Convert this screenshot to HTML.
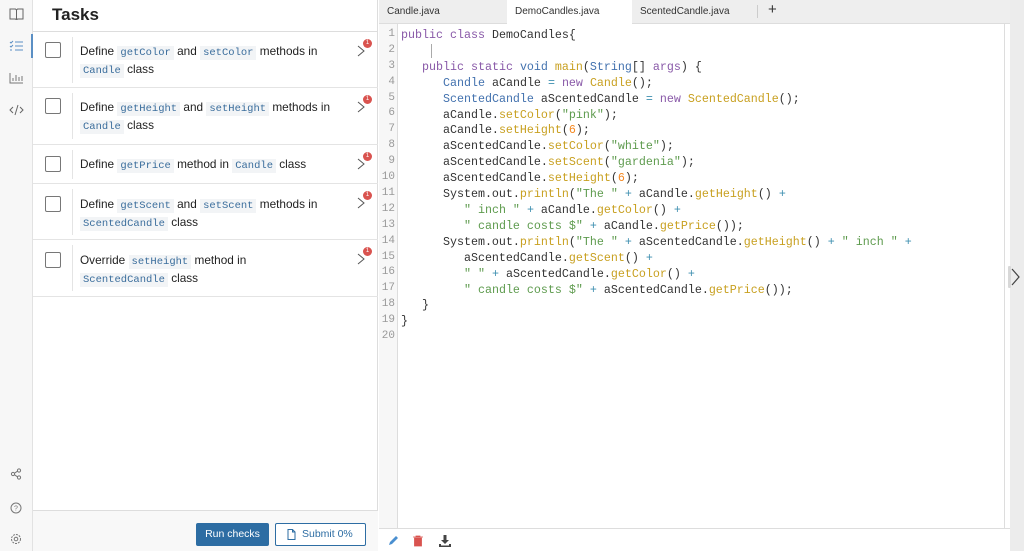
<!DOCTYPE html>
<html><head><style>
*{box-sizing:border-box;margin:0;padding:0}
body{width:1024px;height:551px;overflow:hidden;background:#fff;font-family:"Liberation Sans",sans-serif;position:relative;color:#222}
.side{position:absolute;left:0;top:0;width:33px;height:551px;background:#f7f7f7;border-right:1px solid #e2e2e2}
.side svg{position:absolute;left:9px}
.panel{position:absolute;left:33px;top:0;width:345px;height:551px;background:#fff;border-right:1px solid #ddd}
.hdr{height:32px;border-bottom:1px solid #ddd;font-weight:bold;font-size:17px;padding:5px 0 0 19px}
.row{position:absolute;left:0;width:345px;border-bottom:1px solid #e4e4e4}
.cb{position:absolute;left:12px;width:16px;height:16px;border:1.5px solid #777;border-radius:2px}
.vl{position:absolute;left:39px;width:1px;background:#e4e4e4}
.txt{position:absolute;left:47px;font-size:11.8px;line-height:16px;color:#222}
code{font-family:"Liberation Mono",monospace;font-size:10.5px;color:#3a6d9c;background:#f2f4f6;padding:1px 3px}
.arr{position:absolute;right:13px}
.badge{position:absolute;right:6px;width:9px;height:9px;border-radius:50%;background:#d9534f;color:#fff;font-size:6px;text-align:center;line-height:9px}
.foot{position:absolute;left:0;top:510px;width:345px;height:41px;border-top:1px solid #ddd;background:#f8f8f8}
.btn1{position:absolute;left:163px;top:12px;width:73px;height:23px;background:#2d6da3;color:#fff;font-size:10.5px;text-align:center;line-height:23px;border-radius:2px}
.btn2{position:absolute;left:242px;top:12px;width:91px;height:23px;border:1px solid #2d6da3;color:#2d6da3;font-size:10.5px;line-height:21px;padding-left:26px;background:#fff;border-radius:2px}
.tabs{position:absolute;left:379px;top:0;width:631px;height:24px;background:#eeeeee;border-bottom:1px solid #ddd}
.tab{position:absolute;top:0;height:24px;font-size:10px;line-height:24px;padding-left:8px;color:#333}
.gut{position:absolute;left:379px;top:24px;width:19px;height:504px;background:#f7f7f7;border-right:1px solid #ddd}
.ln{position:absolute;right:2px;font-family:"Liberation Mono",monospace;font-size:11px;color:#999}
pre{position:absolute;left:401px;top:28px;font-family:"Liberation Mono",monospace;font-size:11.66px;line-height:15.9px;color:#333}
.k{color:#8959a8}.t{color:#4271ae}.m{color:#c8a020}.s{color:#5e9b4e}.n{color:#f5871f}.o{color:#3e8fb0}
.bot{position:absolute;left:379px;top:528px;width:631px;height:23px;border-top:1px solid #ddd;background:#fff}
.rs{position:absolute;left:1004px;top:24px;width:1px;height:504px;background:#ddd}
.rstrip{position:absolute;left:1010px;top:0;width:14px;height:551px;background:#ececec}
</style></head><body>
<div class="side">
<svg style="top:8px" width="15" height="12" viewBox="0 0 15 12"><path d="M1 1h5.5l1 1 1-1H14v10H8.5l-1 1-1-1H1z M7.5 2v9" fill="none" stroke="#666" stroke-width="1"/></svg>
<svg style="top:40px" width="15" height="12" viewBox="0 0 15 12"><path d="M1 2l1 1 2-2M1 6l1 1 2-2M1 10h2M6 2h8M6 6h8M6 10h8" fill="none" stroke="#5b8fc4" stroke-width="1"/></svg>
<div style="position:absolute;left:31px;top:34px;width:2px;height:24px;background:#5b8fc4"></div>
<svg style="top:72px" width="15" height="12" viewBox="0 0 15 12"><path d="M1 1v10h13M4 9V6M7 9V3M10 9V5M13 9V4" fill="none" stroke="#777" stroke-width="1"/></svg>
<svg style="top:104px" width="15" height="12" viewBox="0 0 15 12"><path d="M4 3L1 6l3 3M11 3l3 3-3 3M9 1L6 11" fill="none" stroke="#666" stroke-width="1"/></svg>
<svg style="top:468px" width="15" height="12" viewBox="0 0 15 12"><circle cx="4" cy="6" r="1.6" fill="none" stroke="#777"/><circle cx="10" cy="2.5" r="1.6" fill="none" stroke="#777"/><circle cx="10" cy="9.5" r="1.6" fill="none" stroke="#777"/><path d="M5.5 5.2l3-2M5.5 6.8l3 2" stroke="#777"/></svg>
<svg style="top:502px" width="15" height="12" viewBox="0 0 15 12"><circle cx="7" cy="6" r="5" fill="none" stroke="#777"/><text x="7" y="8.5" font-size="7" text-anchor="middle" fill="#777" font-family="Liberation Sans">?</text></svg>
<svg style="top:533px" width="15" height="12" viewBox="0 0 15 12"><circle cx="7" cy="6" r="4.5" fill="none" stroke="#777" stroke-dasharray="2 1"/><circle cx="7" cy="6" r="1.8" fill="none" stroke="#777"/></svg>
</div>
<div class="panel">
<div class="hdr">Tasks</div>
<div class="row" style="top:32px;height:56px"><div class="cb" style="top:10px"></div><div class="vl" style="top:5px;height:46px"></div><div class="txt" style="top:11px">Define <code>getColor</code> and <code>setColor</code> methods in<br><code>Candle</code> class</div><svg class="arr" style="top:13px" width="8" height="12" viewBox="0 0 8 12"><path d="M1 1l6 5-6 5" fill="none" stroke="#555"/></svg><div class="badge" style="top:7px">1</div></div>
<div class="row" style="top:88px;height:57px"><div class="cb" style="top:10px"></div><div class="vl" style="top:5px;height:46px"></div><div class="txt" style="top:11px">Define <code>getHeight</code> and <code>setHeight</code> methods in<br><code>Candle</code> class</div><svg class="arr" style="top:13px" width="8" height="12" viewBox="0 0 8 12"><path d="M1 1l6 5-6 5" fill="none" stroke="#555"/></svg><div class="badge" style="top:7px">1</div></div>
<div class="row" style="top:145px;height:39px"><div class="cb" style="top:11px"></div><div class="vl" style="top:5px;height:29px"></div><div class="txt" style="top:11px">Define <code>getPrice</code> method in <code>Candle</code> class</div><svg class="arr" style="top:13px" width="8" height="12" viewBox="0 0 8 12"><path d="M1 1l6 5-6 5" fill="none" stroke="#555"/></svg><div class="badge" style="top:7px">1</div></div>
<div class="row" style="top:184px;height:56px"><div class="cb" style="top:12px"></div><div class="vl" style="top:5px;height:46px"></div><div class="txt" style="top:12px">Define <code>getScent</code> and <code>setScent</code> methods in<br><code>ScentedCandle</code> class</div><svg class="arr" style="top:13px" width="8" height="12" viewBox="0 0 8 12"><path d="M1 1l6 5-6 5" fill="none" stroke="#555"/></svg><div class="badge" style="top:7px">1</div></div>
<div class="row" style="top:240px;height:57px"><div class="cb" style="top:12px"></div><div class="vl" style="top:5px;height:46px"></div><div class="txt" style="top:12px">Override <code>setHeight</code> method in<br><code>ScentedCandle</code> class</div><svg class="arr" style="top:13px" width="8" height="12" viewBox="0 0 8 12"><path d="M1 1l6 5-6 5" fill="none" stroke="#555"/></svg><div class="badge" style="top:7px">1</div></div>
<div class="foot"><div class="btn1">Run checks</div><div class="btn2"><svg style="position:absolute;left:11px;top:5px" width="9" height="11" viewBox="0 0 9 11"><path d="M1 .5h4.5L8 3v7.5H1z M5.5 .5V3H8" fill="none" stroke="#2d6da3"/></svg>Submit 0%</div></div>
</div>
<div class="tabs">
<div class="tab" style="left:0;width:128px">Candle.java</div>
<div class="tab" style="left:128px;width:125px;background:#fff;height:25px">DemoCandles.java</div>
<div class="tab" style="left:253px;width:125px">ScentedCandle.java</div>
<div style="position:absolute;left:378px;top:5px;width:1px;height:13px;background:#ccc"></div>
<div class="tab" style="left:381px;font-size:15px;line-height:20px">+</div>
</div>
<div class="gut">
<div class="ln" style="top:4px">1</div><div class="ln" style="top:20px">2</div><div class="ln" style="top:36px">3</div><div class="ln" style="top:52px">4</div><div class="ln" style="top:68px">5</div><div class="ln" style="top:83px">6</div><div class="ln" style="top:99px">7</div><div class="ln" style="top:115px">8</div><div class="ln" style="top:131px">9</div><div class="ln" style="top:147px">10</div><div class="ln" style="top:163px">11</div><div class="ln" style="top:179px">12</div><div class="ln" style="top:195px">13</div><div class="ln" style="top:211px">14</div><div class="ln" style="top:227px">15</div><div class="ln" style="top:242px">16</div><div class="ln" style="top:258px">17</div><div class="ln" style="top:274px">18</div><div class="ln" style="top:290px">19</div><div class="ln" style="top:306px">20</div>
</div>
<pre><span class="k">public class</span> DemoCandles{
    
   <span class="k">public static</span> <span class="t">void</span> <span class="m">main</span>(<span class="t">String</span>[] <span class="k">args</span>) {
      <span class="t">Candle</span> aCandle <span class="o">=</span> <span class="k">new</span> <span class="m">Candle</span>();
      <span class="t">ScentedCandle</span> aScentedCandle <span class="o">=</span> <span class="k">new</span> <span class="m">ScentedCandle</span>();
      aCandle.<span class="m">setColor</span>(<span class="s">"pink"</span>);
      aCandle.<span class="m">setHeight</span>(<span class="n">6</span>);
      aScentedCandle.<span class="m">setColor</span>(<span class="s">"white"</span>);
      aScentedCandle.<span class="m">setScent</span>(<span class="s">"gardenia"</span>);
      aScentedCandle.<span class="m">setHeight</span>(<span class="n">6</span>);
      System.out.<span class="m">println</span>(<span class="s">"The "</span> <span class="o">+</span> aCandle.<span class="m">getHeight</span>() <span class="o">+</span>
         <span class="s">" inch "</span> <span class="o">+</span> aCandle.<span class="m">getColor</span>() <span class="o">+</span>
         <span class="s">" candle costs $"</span> <span class="o">+</span> aCandle.<span class="m">getPrice</span>());
      System.out.<span class="m">println</span>(<span class="s">"The "</span> <span class="o">+</span> aScentedCandle.<span class="m">getHeight</span>() <span class="o">+</span> <span class="s">" inch "</span> <span class="o">+</span>
         aScentedCandle.<span class="m">getScent</span>() <span class="o">+</span>
         <span class="s">" "</span> <span class="o">+</span> aScentedCandle.<span class="m">getColor</span>() <span class="o">+</span>
         <span class="s">" candle costs $"</span> <span class="o">+</span> aScentedCandle.<span class="m">getPrice</span>());
   }
}
</pre>
<div style="position:absolute;left:431px;top:44px;width:1px;height:14px;background:#aaa"></div>
<div class="rs"></div>
<div class="bot">
<svg style="position:absolute;left:8px;top:6px" width="12" height="12" viewBox="0 0 12 12"><path d="M2 10l1-3 6-6 2 2-6 6z" fill="#4a8fd0"/></svg>
<svg style="position:absolute;left:34px;top:6px" width="10" height="12" viewBox="0 0 10 12"><path d="M0 2h10M3 2V1h4v1M1.5 3h7v8h-7z" fill="#d9534f" stroke="#d9534f" stroke-width=".8"/></svg>
<svg style="position:absolute;left:60px;top:6px" width="12" height="12" viewBox="0 0 12 12"><path d="M4.5 0h3v5h2.5L6 9 2 5h2.5z M0 9h2v1.5h8V9h2v3H0z" fill="#444"/></svg>
</div>
<div class="rstrip"><svg style="position:absolute;left:1px;top:268px" width="10" height="18" viewBox="0 0 10 18"><path d="M1 1l7 8-7 8" fill="none" stroke="#444" stroke-width="1.2"/></svg></div>
<div style="position:absolute;left:1008px;top:266px;width:3px;height:22px;background:#d8d8d8;border-radius:1px"></div>
</body></html>
